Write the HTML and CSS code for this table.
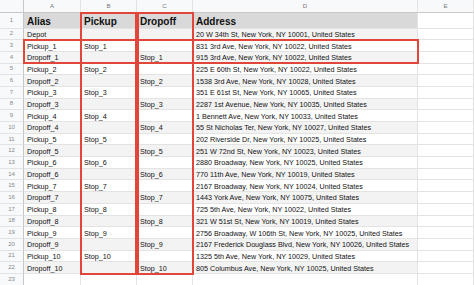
FILE: index.html
```html
<!DOCTYPE html>
<html>
<head>
<meta charset="utf-8">
<link rel="stylesheet" href="styles.css">
</head>
<body>
<div class="sheet">
  <div class="grid">
    <div class="corner"></div><div class="col-h">A</div><div class="col-h">B</div><div class="col-h">C</div><div class="col-h">D</div><div class="col-h">E</div>

    <div class="rn">1</div><div class="c hd">Alias</div><div class="c hd">Pickup</div><div class="c hd">Dropoff</div><div class="c hd">Address</div><div class="c e"></div>
    <div class="rn">2</div><div class="c g">Depot</div><div class="c g"></div><div class="c g"></div><div class="c g">20 W 34th St, New York, NY 10001, United States</div><div class="c e"></div>
    <div class="rn">3</div><div class="c">Pickup_1</div><div class="c">Stop_1</div><div class="c"></div><div class="c">831 3rd Ave, New York, NY 10022, United States</div><div class="c e"></div>
    <div class="rn">4</div><div class="c g">Dropoff_1</div><div class="c g"></div><div class="c g">Stop_1</div><div class="c g">915 3rd Ave, New York, NY 10022, United States</div><div class="c e"></div>
    <div class="rn">5</div><div class="c">Pickup_2</div><div class="c">Stop_2</div><div class="c"></div><div class="c">225 E 60th St, New York, NY 10022, United States</div><div class="c e"></div>
    <div class="rn">6</div><div class="c g">Dropoff_2</div><div class="c g"></div><div class="c g">Stop_2</div><div class="c g">1538 3rd Ave, New York, NY 10028, United States</div><div class="c e"></div>
    <div class="rn">7</div><div class="c">Pickup_3</div><div class="c">Stop_3</div><div class="c"></div><div class="c">351 E 61st St, New York, NY 10065, United States</div><div class="c e"></div>
    <div class="rn">8</div><div class="c g">Dropoff_3</div><div class="c g"></div><div class="c g">Stop_3</div><div class="c g">2287 1st Avenue, New York, NY 10035, United States</div><div class="c e"></div>
    <div class="rn">9</div><div class="c">Pickup_4</div><div class="c">Stop_4</div><div class="c"></div><div class="c">1 Bennett Ave, New York, NY 10033, United States</div><div class="c e"></div>
    <div class="rn">10</div><div class="c g">Dropoff_4</div><div class="c g"></div><div class="c g">Stop_4</div><div class="c g">55 St Nicholas Ter, New York, NY 10027, United States</div><div class="c e"></div>
    <div class="rn">11</div><div class="c">Pickup_5</div><div class="c">Stop_5</div><div class="c"></div><div class="c">202 Riverside Dr, New York, NY 10025, United States</div><div class="c e"></div>
    <div class="rn">12</div><div class="c g">Dropoff_5</div><div class="c g"></div><div class="c g">Stop_5</div><div class="c g">251 W 72nd St, New York, NY 10023, United States</div><div class="c e"></div>
    <div class="rn">13</div><div class="c">Pickup_6</div><div class="c">Stop_6</div><div class="c"></div><div class="c">2880 Broadway, New York, NY 10025, United States</div><div class="c e"></div>
    <div class="rn">14</div><div class="c g">Dropoff_6</div><div class="c g"></div><div class="c g">Stop_6</div><div class="c g">770 11th Ave, New York, NY 10019, United States</div><div class="c e"></div>
    <div class="rn">15</div><div class="c">Pickup_7</div><div class="c">Stop_7</div><div class="c"></div><div class="c">2167 Broadway, New York, NY 10024, United States</div><div class="c e"></div>
    <div class="rn">16</div><div class="c g">Dropoff_7</div><div class="c g"></div><div class="c g">Stop_7</div><div class="c g">1443 York Ave, New York, NY 10075, United States</div><div class="c e"></div>
    <div class="rn">17</div><div class="c">Pickup_8</div><div class="c">Stop_8</div><div class="c"></div><div class="c">725 5th Ave, New York, NY 10022, United States</div><div class="c e"></div>
    <div class="rn">18</div><div class="c g">Dropoff_8</div><div class="c g"></div><div class="c g">Stop_8</div><div class="c g">321 W 51st St, New York, NY 10019, United States</div><div class="c e"></div>
    <div class="rn">19</div><div class="c">Pickup_9</div><div class="c">Stop_9</div><div class="c"></div><div class="c">2756 Broadway, W 106th St, New York, NY 10025, United States</div><div class="c e"></div>
    <div class="rn">20</div><div class="c g">Dropoff_9</div><div class="c g"></div><div class="c g">Stop_9</div><div class="c g">2167 Frederick Douglass Blvd, New York, NY 10026, United States</div><div class="c e"></div>
    <div class="rn">21</div><div class="c">Pickup_10</div><div class="c">Stop_10</div><div class="c"></div><div class="c">1325 5th Ave, New York, NY 10029, United States</div><div class="c e"></div>
    <div class="rn">22</div><div class="c g">Dropoff_10</div><div class="c g"></div><div class="c g">Stop_10</div><div class="c g">805 Columbus Ave, New York, NY 10025, United States</div><div class="c e"></div>
    <div class="rn">23</div><div class="c"></div><div class="c"></div><div class="c"></div><div class="c"></div><div class="c e"></div>
  </div>
  <div class="hl hl-b"></div>
  <div class="hl hl-c"></div>
  <div class="hl hl-rows"></div>
</div>
</body>
</html>
```
FILE: styles.css
```css
html, body {
  margin: 0;
  padding: 0;
  background: #ffffff;
  overflow: hidden;
}
.sheet {
  position: relative;
  width: 474px;
  height: 285px;
  overflow: hidden;
  font-family: "Liberation Sans", Arial, sans-serif;
}
.grid {
  display: grid;
  grid-template-columns: 24px 57px 56px 56px 225px 56px;
  grid-template-rows: 13px 15.5px;
  grid-auto-rows: 11.7px;
}
.grid > div {
  box-sizing: border-box;
  border-right: 1px solid #e3e3e3;
  border-bottom: 1px solid #e3e3e3;
  overflow: hidden;
  white-space: nowrap;
}
.corner {
  background: #f8f9fa;
  border-right: 1px solid #c7c7c7 !important;
  border-bottom: 1px solid #c7c7c7 !important;
}
.col-h {
  background: #f8f9fa;
  color: #777;
  font-size: 6px;
  text-align: center;
  line-height: 12px;
  border-bottom: 1px solid #c7c7c7 !important;
}
.rn {
  background: #f8f9fa;
  color: #888;
  font-size: 6px;
  text-align: center;
  line-height: 11px;
  border-right: 1px solid #c7c7c7 !important;
  display: flex;
  align-items: center;
  justify-content: center;
}
.c {
  font-size: 7.2px;
  color: #111;
  padding-left: 3px;
  display: flex;
  align-items: center;
  padding-top: 1px;
}
.c.g {
  background: #f3f3f3;
}
.c.hd {
  background: #d9d9d9;
  font-size: 10px;
  font-weight: bold;
  color: #111;
  padding-top: 2px;
}
.c.e {
  background: #ffffff;
}
.hl {
  position: absolute;
  box-sizing: border-box;
  border: 2px solid #e2463b;
}
.hl-b {
  left: 80px;
  top: 12px;
  width: 57px;
  height: 263px;
}
.hl-c {
  left: 137px;
  top: 12px;
  width: 57px;
  height: 263px;
}
.hl-rows {
  left: 23px;
  top: 39px;
  width: 396px;
  height: 25px;
}
```
